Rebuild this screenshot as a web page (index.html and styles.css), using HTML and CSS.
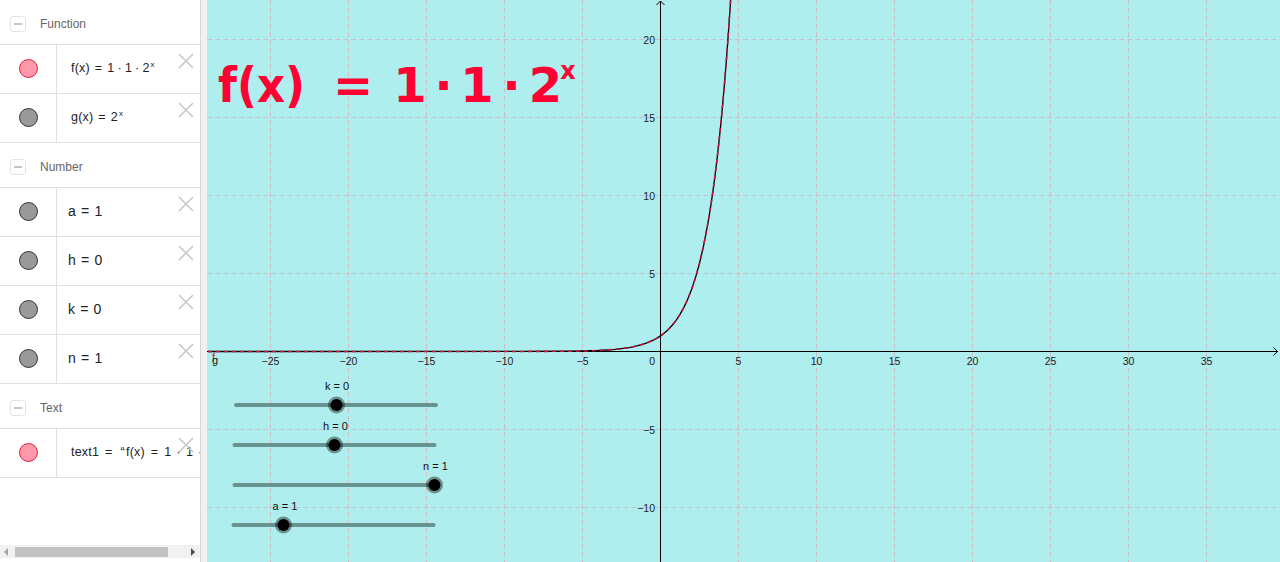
FILE: index.html
```
<!DOCTYPE html>
<html>
<head>
<meta charset="utf-8">
<link rel="stylesheet" href="styles.css">
</head>
<body>
<div class="app">
  <aside class="algebra">
    <div class="list">
      <div class="group"><span class="toggle"></span><span class="group-title">Function</span></div>
      <div class="item">
        <div class="marble"><span class="dot dot-red"></span></div>
        <div class="formula">f(x)<span class="rel">=</span>1<span class="bin">·</span>1<span class="bin">·</span>2<sup>x</sup></div>
        <svg class="close" viewBox="0 0 16 16"><path d="M1 1L15 15M15 1L1 15"/></svg>
      </div>
      <div class="item">
        <div class="marble"><span class="dot dot-gray"></span></div>
        <div class="formula">g(x)<span class="rel">=</span>2<sup>x</sup></div>
        <svg class="close" viewBox="0 0 16 16"><path d="M1 1L15 15M15 1L1 15"/></svg>
      </div>
      <div class="group"><span class="toggle"></span><span class="group-title">Number</span></div>
      <div class="item">
        <div class="marble"><span class="dot dot-gray"></span></div>
        <div class="formula num">a<span class="rel">=</span>1</div>
        <svg class="close" viewBox="0 0 16 16"><path d="M1 1L15 15M15 1L1 15"/></svg>
      </div>
      <div class="item">
        <div class="marble"><span class="dot dot-gray"></span></div>
        <div class="formula num">h<span class="rel">=</span>0</div>
        <svg class="close" viewBox="0 0 16 16"><path d="M1 1L15 15M15 1L1 15"/></svg>
      </div>
      <div class="item">
        <div class="marble"><span class="dot dot-gray"></span></div>
        <div class="formula num">k<span class="rel">=</span>0</div>
        <svg class="close" viewBox="0 0 16 16"><path d="M1 1L15 15M15 1L1 15"/></svg>
      </div>
      <div class="item">
        <div class="marble"><span class="dot dot-gray"></span></div>
        <div class="formula num">n<span class="rel">=</span>1</div>
        <svg class="close" viewBox="0 0 16 16"><path d="M1 1L15 15M15 1L1 15"/></svg>
      </div>
      <div class="group"><span class="toggle"></span><span class="group-title">Text</span></div>
      <div class="item">
        <div class="marble"><span class="dot dot-red"></span></div>
        <div class="formula wide">text1<span class="rel">=</span><span class="quote">“</span>f(x)<span class="rel">=</span>1<span class="bin">·</span>1<span class="bin">·</span>2<sup>x</sup>”</div>
        <svg class="close" viewBox="0 0 16 16"><path d="M1 1L15 15M15 1L1 15"/></svg>
      </div>
    </div>
    <div class="hscroll"><span class="arrow-left"></span><span class="thumb"></span><span class="arrow-right"></span></div>
  </aside>
  <div class="splitter"></div>
  <main class="graphics">
    <svg class="canvas" viewBox="207 0 1073 562" width="1073" height="562">
      <g class="grid">
        <line x1="270.5" y1="0" x2="270.5" y2="562"/>
        <line x1="348.5" y1="0" x2="348.5" y2="562"/>
        <line x1="426.5" y1="0" x2="426.5" y2="562"/>
        <line x1="504.5" y1="0" x2="504.5" y2="562"/>
        <line x1="582.5" y1="0" x2="582.5" y2="562"/>
        <line x1="738.5" y1="0" x2="738.5" y2="562"/>
        <line x1="816.5" y1="0" x2="816.5" y2="562"/>
        <line x1="894.5" y1="0" x2="894.5" y2="562"/>
        <line x1="972.5" y1="0" x2="972.5" y2="562"/>
        <line x1="1050.5" y1="0" x2="1050.5" y2="562"/>
        <line x1="1128.5" y1="0" x2="1128.5" y2="562"/>
        <line x1="1206.5" y1="0" x2="1206.5" y2="562"/>
        <line x1="207" y1="39.5" x2="1280" y2="39.5"/>
        <line x1="207" y1="117.5" x2="1280" y2="117.5"/>
        <line x1="207" y1="195.5" x2="1280" y2="195.5"/>
        <line x1="207" y1="273.5" x2="1280" y2="273.5"/>
        <line x1="207" y1="429.5" x2="1280" y2="429.5"/>
        <line x1="207" y1="507.5" x2="1280" y2="507.5"/>
      </g>
      <g class="axis">
        <line x1="207" y1="351.5" x2="1278" y2="351.5"/>
        <line x1="660.5" y1="1" x2="660.5" y2="562"/>
        <path d="M656.5 5L660.5 1L664.5 5"/>
        <path d="M1273.5 347.5L1277.5 351.5L1273.5 355.5"/>
      </g>
      <g class="tick-x">
        <text x="270.5" y="365">−25</text>
        <text x="348.5" y="365">−20</text>
        <text x="426.5" y="365">−15</text>
        <text x="504.5" y="365">−10</text>
        <text x="582.5" y="365">−5</text>
        <text x="738.5" y="365">5</text>
        <text x="816.5" y="365">10</text>
        <text x="894.5" y="365">15</text>
        <text x="972.5" y="365">20</text>
        <text x="1050.5" y="365">25</text>
        <text x="1128.5" y="365">30</text>
        <text x="1206.5" y="365">35</text>
      </g>
      <g class="tick-y">
        <text x="655" y="365">0</text>
        <text x="655" y="43.5">20</text>
        <text x="655" y="121.5">15</text>
        <text x="655" y="199.5">10</text>
        <text x="655" y="277.5">5</text>
        <text x="655" y="433.5">−5</text>
        <text x="655" y="511.5">−10</text>
      </g>
      <polyline class="curve-g" points="208,351.5 520,351.45 567,351.26 582.5,351.01 598.1,350.5 613.7,349.55 629.3,347.6 637.1,345.98 644.9,343.7 652.7,340.47 656.6,338.38 660.5,335.9 664.4,332.95 668.3,329.44 672.2,325.26 676.1,320.3 680,314.4 683.9,307.38 687.8,299 691.7,289.1 695.6,277.3 699.5,263.25 703.4,246.6 707.3,226.7 709.25,215.4 711.2,203.1 713.15,189.7 715.1,175 717.05,159 719,141.6 720.95,122.6 722.9,101.9 724.85,79.3 726.8,54.7 728.75,27.8 730.7,-1.5"/>
      <polyline class="curve-f" points="208,351.5 520,351.45 567,351.26 582.5,351.01 598.1,350.5 613.7,349.55 629.3,347.6 637.1,345.98 644.9,343.7 652.7,340.47 656.6,338.38 660.5,335.9 664.4,332.95 668.3,329.44 672.2,325.26 676.1,320.3 680,314.4 683.9,307.38 687.8,299 691.7,289.1 695.6,277.3 699.5,263.25 703.4,246.6 707.3,226.7 709.25,215.4 711.2,203.1 713.15,189.7 715.1,175 717.05,159 719,141.6 720.95,122.6 722.9,101.9 724.85,79.3 726.8,54.7 728.75,27.8 730.7,-1.5"/>
      <text class="obj-label" x="212" y="364"><tspan class="obj-f" dy="-3">f</tspan><tspan dx="-3" dy="3">g</tspan></text>

      <g class="slider">
        <line class="slider-track" x1="236" y1="405" x2="436" y2="405"/>
        <circle class="knob-halo" cx="336.5" cy="405" r="8.5"/>
        <circle class="knob" cx="336.5" cy="405" r="6"/>
        <text class="slider-label" x="325" y="390">k = 0</text>
      </g>
      <g class="slider">
        <line class="slider-track" x1="234.5" y1="445" x2="434.5" y2="445"/>
        <circle class="knob-halo" cx="334.5" cy="445" r="8.5"/>
        <circle class="knob" cx="334.5" cy="445" r="6"/>
        <text class="slider-label" x="323" y="430">h = 0</text>
      </g>
      <g class="slider">
        <line class="slider-track" x1="234.5" y1="485" x2="434.5" y2="485"/>
        <circle class="knob-halo" cx="434.5" cy="485" r="8.5"/>
        <circle class="knob" cx="434.5" cy="485" r="6"/>
        <text class="slider-label" x="423" y="470">n = 1</text>
      </g>
      <g class="slider">
        <line class="slider-track" x1="233.5" y1="525" x2="433.5" y2="525"/>
        <circle class="knob-halo" cx="283.5" cy="525" r="8.5"/>
        <circle class="knob" cx="283.5" cy="525" r="6"/>
        <text class="slider-label" x="272.5" y="510">a = 1</text>
      </g>

      <g class="big">
        <text class="start" x="218" y="102" textLength="87" lengthAdjust="spacingAndGlyphs">f(x)</text>
        <text x="353" y="102">=</text>
        <text x="410" y="102">1</text>
        <text x="443.5" y="102">⋅</text>
        <text x="477" y="102">1</text>
        <text x="511.5" y="102">⋅</text>
        <text x="545.5" y="102">2</text>
        <text class="sup" x="568" y="79">x</text>
      </g>
    </svg>
  </main>
</div>
</body>
</html>
```
FILE: styles.css
```
* { box-sizing: border-box; }
html, body { margin: 0; padding: 0; }
body {
  font-family: "Liberation Sans", Arial, sans-serif;
  background: #fff;
}
.app {
  display: flex;
  width: 1280px;
  height: 562px;
  overflow: hidden;
}
.algebra {
  width: 201px;
  flex: none;
  border-right: 1px solid #d6d6d6;
  display: flex;
  flex-direction: column;
  background: #fff;
  padding-bottom: 4px;
}
.splitter {
  width: 6px;
  flex: none;
  background: #f0f0f0;
}
.graphics {
  flex: 1;
  background: #afeeee;
  overflow: hidden;
}
.canvas { display: block; }

/* algebra list */
.list { flex: 1; overflow: hidden; }
.group {
  height: 45px;
  border-bottom: 1px solid #e0e0e0;
  display: flex;
  align-items: center;
  padding: 4px 0 0 10px;
  gap: 14px;
}
.toggle {
  width: 16px;
  height: 16px;
  border: 1px solid #e4e4e4;
  border-radius: 3px;
  display: flex;
  align-items: center;
  justify-content: center;
}
.toggle::before {
  content: "";
  width: 8px;
  height: 2px;
  background: #c4c4c4;
}
.group-title {
  font-size: 12px;
  color: #666;
}
.item {
  height: 49px;
  border-bottom: 1px solid #e0e0e0;
  display: flex;
  position: relative;
}
.marble {
  width: 57px;
  flex: none;
  border-right: 1px solid #e0e0e0;
  display: flex;
  align-items: center;
  justify-content: center;
  padding-bottom: 2px;
}
.dot {
  width: 19px;
  height: 19px;
  border-radius: 50%;
  border: 1px solid;
}
.dot-red { background: #ff99aa; border-color: #e11d3f; }
.dot-gray { background: #999; border-color: #333; }
.formula {
  flex: 1;
  display: flex;
  align-items: center;
  padding-left: 14px;
  padding-bottom: 2px;
  white-space: nowrap;
  overflow: hidden;
  font-size: 12.5px;
  color: #222;
  letter-spacing: 0.2px;
}
.formula.num { padding-left: 11px; font-size: 14px; }
.formula sup {
  font-size: 8px;
  align-self: flex-start;
  margin-top: 15px;
  margin-left: 1px;
}
.rel { margin: 0 5px; }
.bin { margin: 0 3px; }
.quote { margin-right: 1px; }
.formula.wide .rel { margin: 0 6px; }
.formula.wide .bin { margin: 0 5px; }
.formula.wide .quote { margin-left: 2px; }
.close {
  position: absolute;
  top: 8px;
  right: 6px;
  width: 16px;
  height: 16px;
  fill: none;
  stroke: #c8c8c8;
  stroke-width: 1.6;
}

/* scrollbar */
.hscroll {
  height: 13px;
  background: #f1f1f1;
  display: flex;
  align-items: center;
}
.arrow-left {
  margin-left: 4px;
  width: 0;
  height: 0;
  border-right: 4px solid #a5a5a5;
  border-top: 4px solid transparent;
  border-bottom: 4px solid transparent;
}
.thumb {
  margin-left: 7px;
  width: 153px;
  height: 10px;
  background: #c1c1c1;
}
.arrow-right {
  margin-left: auto;
  margin-right: 5px;
  width: 0;
  height: 0;
  border-left: 4px solid #4a4a4a;
  border-top: 4px solid transparent;
  border-bottom: 4px solid transparent;
}

/* graphics */
.grid line {
  stroke: #cdbfc3;
  stroke-width: 1;
  stroke-dasharray: 5 3;
  shape-rendering: crispEdges;
}
.axis line, .axis path {
  stroke: #000;
  stroke-width: 1;
  fill: none;
}
.tick-x text, .tick-y text {
  font-family: "Liberation Sans", Arial, sans-serif;
  font-size: 10.5px;
  fill: #222;
}
.tick-x text { text-anchor: middle; }
.tick-y text { text-anchor: end; }
.curve-g {
  fill: none;
  stroke: #000;
  stroke-width: 1.3;
}
.curve-f {
  fill: none;
  stroke: #c8103c;
  stroke-width: 1.6;
  stroke-dasharray: 4 4;
}
.obj-label {
  font-family: "Liberation Sans", Arial, sans-serif;
  font-size: 11px;
  fill: #111;
}
.obj-f { fill: #e0103c; }
.slider-track {
  stroke: #68928f;
  stroke-width: 4;
  stroke-linecap: round;
}
.knob-halo { fill: #000; fill-opacity: 0.4; }
.knob { fill: #000; }
.slider-label {
  font-family: "Liberation Sans", Arial, sans-serif;
  font-size: 11px;
  fill: #111;
}
.big text {
  font-family: "DejaVu Sans", sans-serif;
  font-weight: bold;
  font-size: 48px;
  fill: #ff0033;
  text-anchor: middle;
}
.big text.start { text-anchor: start; }
.big .sup { font-size: 24px; }
```
